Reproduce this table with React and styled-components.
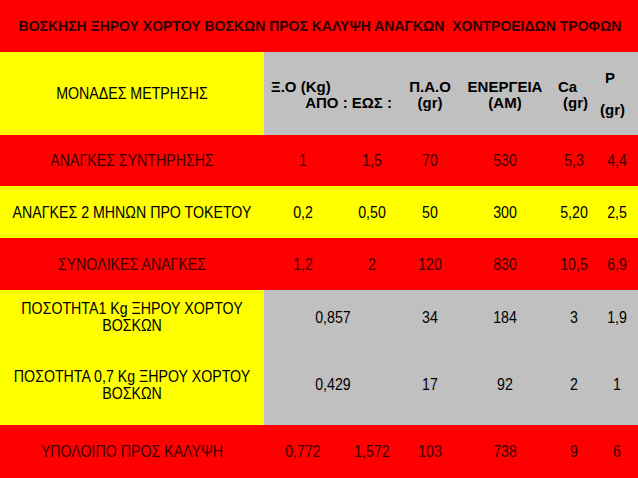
import styled, { createGlobalStyle } from 'styled-components';

const GlobalStyle = createGlobalStyle`
  html, body {
    margin: 0;
    padding: 0;
    background: #ff0000;
    overflow: hidden;
  }
  body {
    font-family: 'Liberation Sans', Arial, sans-serif;
  }
`;

const colors = {
  red: '#ff0000',
  yellow: '#ffff00',
  gray: '#c0c0c0',
};

const textOn = {
  red: '#3c0000',
  yellow: '#000000',
  gray: '#000000',
};

const Table = styled.div`
  display: grid;
  width: 638px;
  height: 478px;
  grid-template-columns: 264px 78px 60px 56px 94px 44px 42px;
  grid-template-rows: 52px 83px 51px 52px 52px 54px 81px 53px;
`;

const Title = styled.div`
  grid-column: 1 / -1;
  background: ${colors.red};
  color: #300000;
  font-weight: bold;
  font-size: 14px;
  display: flex;
  align-items: center;
  justify-content: center;
  white-space: pre;
  padding-left: 2px;
`;

const Cell = styled.div`
  grid-column: span ${(p) => p.$span || 1};
  background: ${(p) => colors[p.$bg]};
  color: ${(p) => textOn[p.$bg]};
  font-size: 14.2px;
  line-height: 15px;
  display: flex;
  align-items: center;
  justify-content: center;
  text-align: center;
`;

/* the source text is drawn a bit taller than plain Arial */
const Tall = styled.span`
  display: inline-block;
  transform: scaleY(1.13);
`;

const LabelText = styled(Tall)`
  width: 250px;
`;

const HeadCell = styled(Cell)`
  font-weight: bold;
  font-size: 15px;
  line-height: 16px;
  flex-direction: column;
  align-items: ${(p) => p.$items || 'center'};
  padding: ${(p) => p.$pad || '3px 0 0'};
`;

const HeadLine = styled.span`
  display: block;
  align-self: ${(p) => p.$self || 'auto'};
  padding-left: ${(p) => p.$indent || 0}px;
  min-height: 16px;
`;

const rows = [
  { bg: 'red', label: 'ΑΝΑΓΚΕΣ ΣΥΝΤΗΡΗΣΗΣ', values: ['1', '1,5', '70', '530', '5,3', '4,4'] },
  { bg: 'yellow', label: 'ΑΝΑΓΚΕΣ 2 ΜΗΝΩΝ ΠΡΟ ΤΟΚΕΤΟΥ', values: ['0,2', '0,50', '50', '300', '5,20', '2,5'] },
  { bg: 'red', label: 'ΣΥΝΟΛΙΚΕΣ ΑΝΑΓΚΕΣ', values: ['1,2', '2', '120', '830', '10,5', '6,9'] },
  { bg: 'yellow', side: 'gray', label: 'ΠΟΣΟΤΗΤΑ1 Kg ΞΗΡΟΥ ΧΟΡΤΟΥ ΒΟΣΚΩΝ', merged: '0,857', values: ['34', '184', '3', '1,9'] },
  { bg: 'yellow', side: 'gray', label: 'ΠΟΣΟΤΗΤΑ 0,7 Kg ΞΗΡΟΥ ΧΟΡΤΟΥ ΒΟΣΚΩΝ', merged: '0,429', values: ['17', '92', '2', '1'] },
  { bg: 'red', label: 'ΥΠΟΛΟΙΠΟ ΠΡΟΣ ΚΑΛΥΨΗ', values: ['0,772', '1,572', '103', '738', '9', '6'] },
];

const App = () => {
  return (
    <>
      <GlobalStyle />
      <Table>
        <Title>ΒΟΣΚΗΣΗ ΞΗΡΟΥ ΧΟΡΤΟΥ ΒΟΣΚΩΝ ΠΡΟΣ ΚΑΛΥΨΗ ΑΝΑΓΚΩΝ  ΧΟΝΤΡΟΕΙΔΩΝ ΤΡΟΦΩΝ</Title>

        <Cell $bg="yellow">
          <LabelText>ΜΟΝΑΔΕΣ ΜΕΤΡΗΣΗΣ</LabelText>
        </Cell>
        <HeadCell $bg="gray" $span={2} $items="stretch" $pad="3px 10px 0 7px">
          <HeadLine $self="flex-start">Ξ.Ο (Kg)</HeadLine>
          <HeadLine $self="flex-end">ΑΠΟ : ΕΩΣ :</HeadLine>
        </HeadCell>
        <HeadCell $bg="gray">
          <HeadLine>Π.Α.Ο</HeadLine>
          <HeadLine>(gr)</HeadLine>
        </HeadCell>
        <HeadCell $bg="gray">
          <HeadLine>ΕΝΕΡΓΕΙΑ</HeadLine>
          <HeadLine>(AM)</HeadLine>
        </HeadCell>
        <HeadCell $bg="gray" $items="flex-start" $pad="3px 0 0 6px">
          <HeadLine>Ca</HeadLine>
          <HeadLine $indent={5}>(gr)</HeadLine>
        </HeadCell>
        <HeadCell $bg="gray" $items="flex-start" $pad="0 0 0 4px">
          <HeadLine $indent={5}>P</HeadLine>
          <HeadLine />
          <HeadLine>(gr)</HeadLine>
        </HeadCell>

        {rows.map((row) => {
          const side = row.side || row.bg;
          return [
            <Cell key={row.label} $bg={row.bg}>
              <LabelText>{row.label}</LabelText>
            </Cell>,
            row.merged && (
              <Cell key={row.label + '-m'} $bg={side} $span={2}>
                <Tall>{row.merged}</Tall>
              </Cell>
            ),
            ...row.values.map((v, i) => (
              <Cell key={row.label + i} $bg={side}>
                <Tall>{v}</Tall>
              </Cell>
            )),
          ];
        })}
      </Table>
    </>
  );
};

export default App;
